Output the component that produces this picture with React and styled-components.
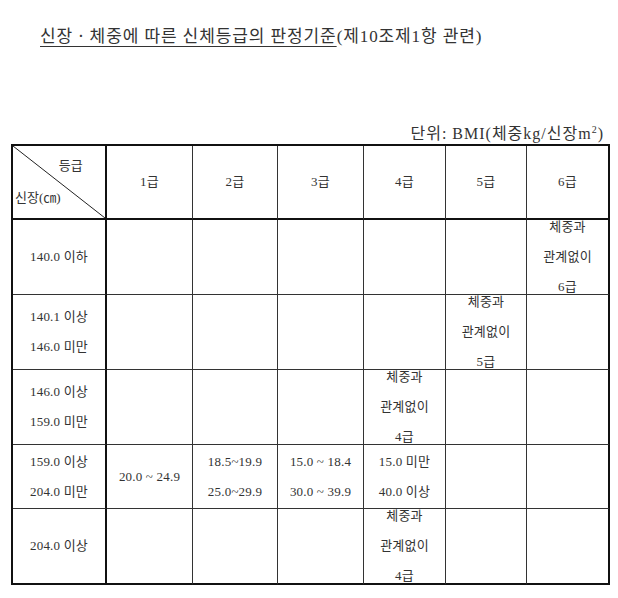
import styled, { createGlobalStyle } from "styled-components";

const GlobalStyle = createGlobalStyle`
  html, body {
    margin: 0;
    padding: 0;
    background: #ffffff;
  }
  body {
    font-family: "Liberation Serif", "Noto Sans CJK KR", serif;
    color: #333333;
  }
`;

const Page = styled.div`
  width: 618px;
  height: 598px;
  padding: 26px 0 0 11px;
  box-sizing: border-box;
`;

const Title = styled.h1`
  margin: 0 0 0 29px;
  font-size: 17px;
  font-weight: normal;
  line-height: 22px;
  letter-spacing: 0.9px;
  white-space: nowrap;
`;

const Underlined = styled.span`
  text-decoration: underline;
  text-underline-offset: 4px;
  text-decoration-thickness: 1px;
`;

const Unit = styled.div`
  margin-top: 76px;
  width: 593px;
  text-align: right;
  font-size: 16px;
  line-height: 20px;
  letter-spacing: 1px;
  white-space: nowrap;

  sup {
    font-size: 10px;
    line-height: 0;
  }
`;

const Grid = styled.div`
  display: grid;
  grid-template-columns: 94px 86px 85px 86px 82px 81px 83px;
  grid-template-rows: 74px 75px 75px 75px 64px 76px;
  width: fit-content;
  border-left: 2px solid #111;
  border-top: 2px solid #111;
  font-size: 13px;
  letter-spacing: 0.2px;
`;

const Cell = styled.div`
  position: relative;
  box-sizing: border-box;
  display: flex;
  flex-direction: column;
  align-items: center;
  justify-content: center;
  text-align: center;
  line-height: 30px;
  white-space: nowrap;
  border-right: ${(p) => (p.$thickRight ? "2px solid #111" : "1px solid #333")};
  border-bottom: ${(p) => (p.$thickBottom ? "2px solid #111" : "1px solid #333")};
`;

const CornerCell = styled(Cell)`
  align-items: stretch;
  justify-content: space-between;
  padding: 10px 0 10px 2px;
  line-height: 20px;
`;

const CornerTop = styled.span`
  align-self: flex-end;
  padding-right: 22px;
`;

const CornerBottom = styled.span`
  align-self: flex-start;
  letter-spacing: 0;
`;

const Diagonal = styled.svg`
  position: absolute;
  inset: 0;
  width: 100%;
  height: 100%;
  pointer-events: none;
`;

const grades = ["1급", "2급", "3급", "4급", "5급", "6급"];

const rows = [
  { label: ["140.0 이하"], cells: { 5: ["체중과", "관계없이", "6급"] } },
  { label: ["140.1 이상", "146.0 미만"], cells: { 4: ["체중과", "관계없이", "5급"] } },
  { label: ["146.0 이상", "159.0 미만"], cells: { 3: ["체중과", "관계없이", "4급"] } },
  {
    label: ["159.0 이상", "204.0 미만"],
    cells: {
      0: ["20.0 ~ 24.9"],
      1: ["18.5~19.9", "25.0~29.9"],
      2: ["15.0 ~ 18.4", "30.0 ~ 39.9"],
      3: ["15.0 미만", "40.0 이상"],
    },
  },
  { label: ["204.0 이상"], cells: { 3: ["체중과", "관계없이", "4급"] } },
];

function Lines({ lines }) {
  return lines.map((line) => <span key={line}>{line}</span>);
}

export default function App() {
  return (
    <Page>
      <GlobalStyle />
      <Title>
        <Underlined>신장ㆍ체중에 따른 신체등급의 판정기준</Underlined>(제10조제1항 관련)
      </Title>
      <Unit>
        단위: BMI(체중kg/신장m<sup>2</sup>)
      </Unit>
      <Grid>
        <CornerCell $thickRight $thickBottom>
          <Diagonal viewBox="0 0 100 100" preserveAspectRatio="none">
            <line x1="0" y1="0" x2="100" y2="100" stroke="#222" strokeWidth="1" vectorEffect="non-scaling-stroke" />
          </Diagonal>
          <CornerTop>등급</CornerTop>
          <CornerBottom>신장(㎝)</CornerBottom>
        </CornerCell>
        {grades.map((g, i) => (
          <Cell key={g} $thickBottom $thickRight={i === grades.length - 1}>
            {g}
          </Cell>
        ))}
        {rows.map((row, r) => {
          const last = r === rows.length - 1;
          return [
            <Cell key={`l${r}`} $thickRight $thickBottom={last}>
              <Lines lines={row.label} />
            </Cell>,
            ...grades.map((g, c) => (
              <Cell key={`${r}-${c}`} $thickRight={c === grades.length - 1} $thickBottom={last}>
                {row.cells[c] && <Lines lines={row.cells[c]} />}
              </Cell>
            )),
          ];
        })}
      </Grid>
    </Page>
  );
}
